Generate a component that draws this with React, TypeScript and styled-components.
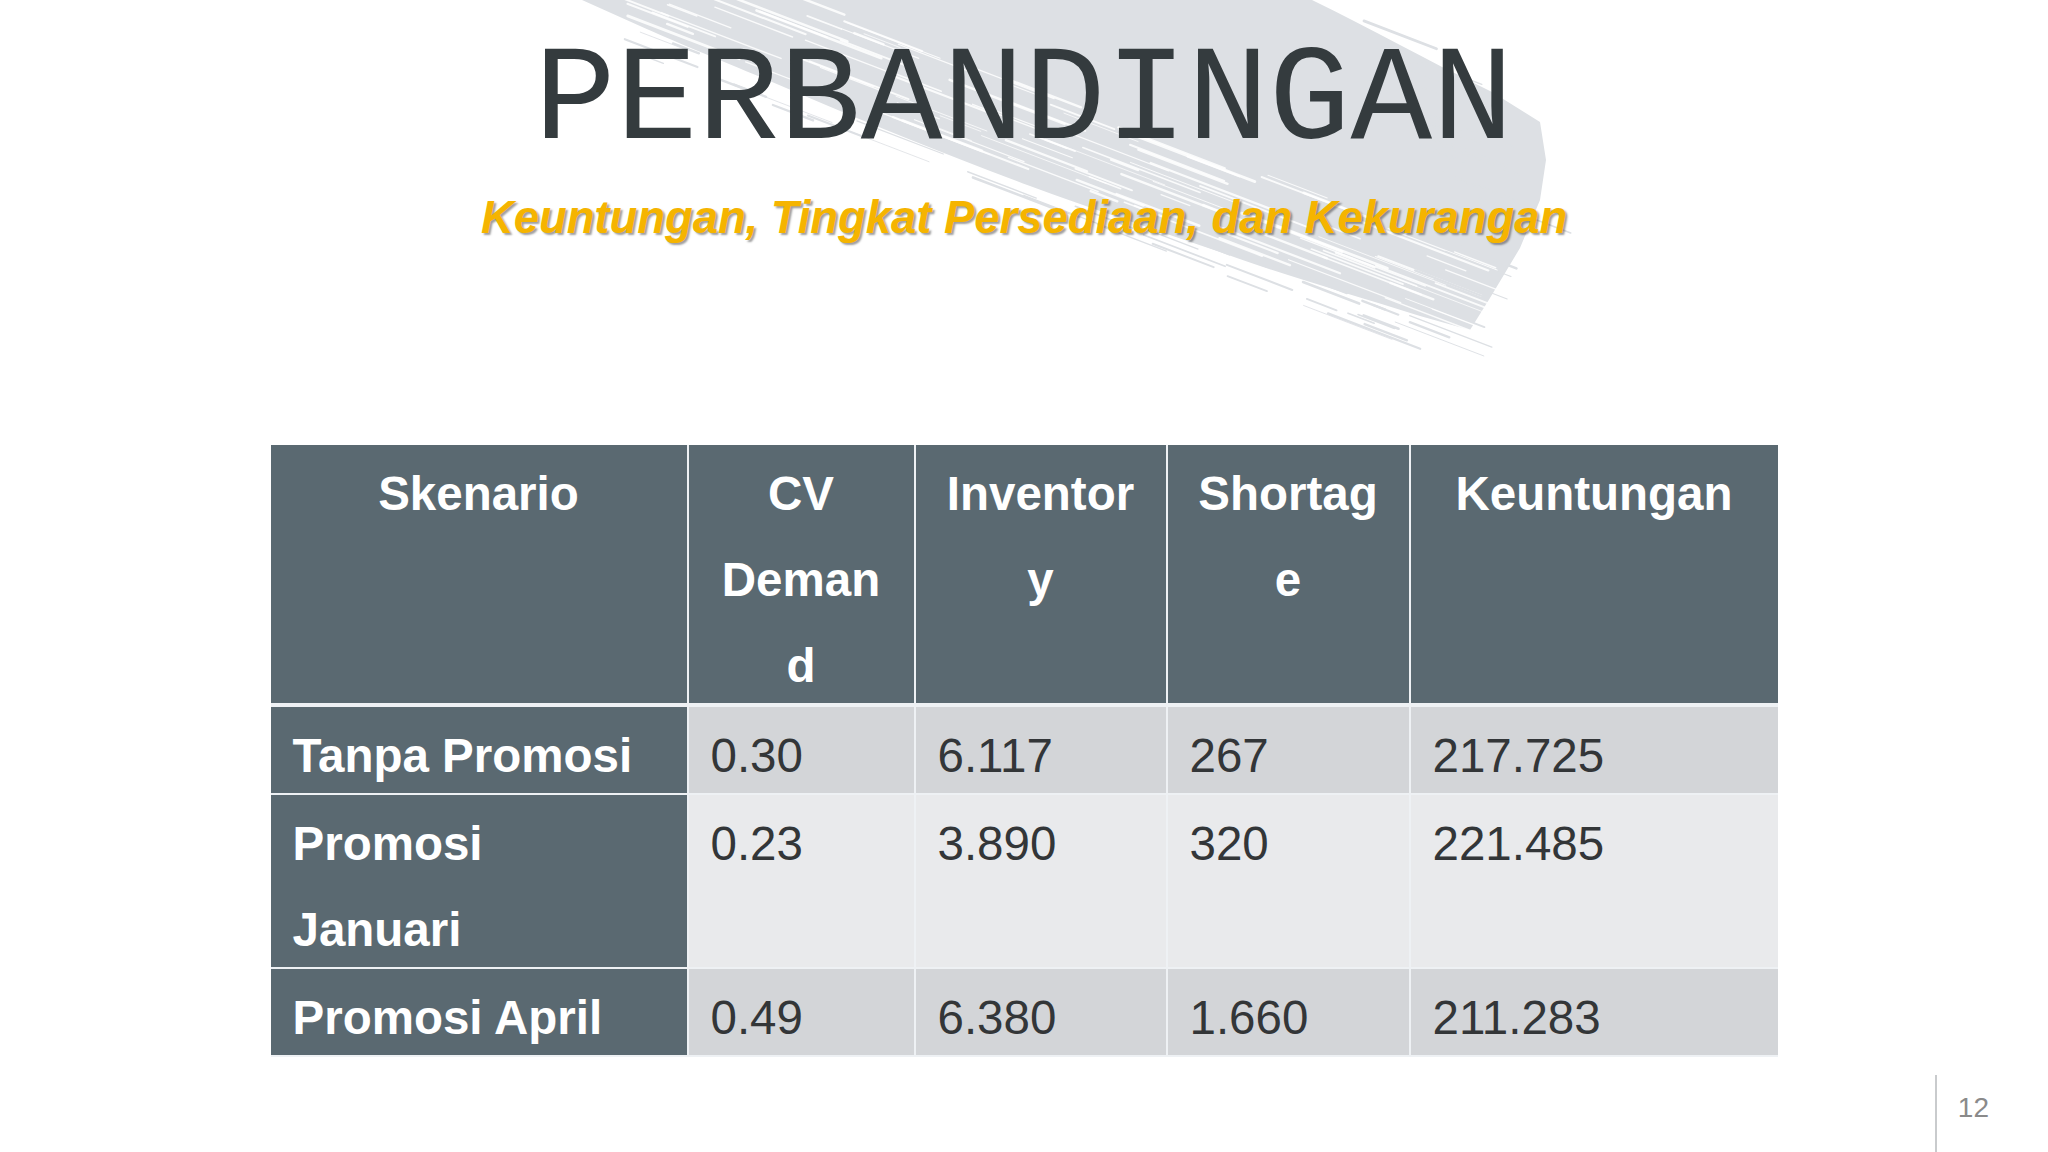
import React from "react";
import styled, { createGlobalStyle } from "styled-components";

const GlobalStyle = createGlobalStyle`
  html, body {
    margin: 0;
    padding: 0;
    background: #ffffff;
  }
  body {
    font-family: "Liberation Sans", Arial, sans-serif;
  }
`;

const Slide = styled.div`
  position: relative;
  width: 2048px;
  height: 1152px;
  overflow: hidden;
  background: #ffffff;
  display: flex;
  flex-direction: column;
`;

const Brush = styled.svg`
  position: absolute;
  top: 0;
  left: 0;
  z-index: 0;
`;

const Header = styled.header`
  position: relative;
  z-index: 1;
  display: flex;
  flex-direction: column;
  align-items: center;
  padding-top: 34px;
`;

const Title = styled.h1`
  margin: 0;
  font-family: "Liberation Mono", "Courier New", monospace;
  font-weight: 400;
  font-size: 136px;
  line-height: 1;
  color: #343b3e;
`;

const Subtitle = styled.h2`
  margin: 25px 0 0;
  font-family: "Liberation Sans", Arial, sans-serif;
  font-weight: 700;
  font-style: italic;
  font-size: 45.4px;
  line-height: 1;
  color: #f5b400;
  text-shadow: 2px 2px 2px rgba(0, 0, 0, 0.38);
`;

const Table = styled.table`
  position: relative;
  z-index: 1;
  margin: 205px auto 0;
  width: 1507px;
  table-layout: fixed;
  border-collapse: collapse;
  font-family: "Liberation Sans", Arial, sans-serif;
  font-size: 47.5px;
`;

const Col = styled.col<{ $w: number }>`
  width: ${(p) => p.$w}px;
`;

const HeadCell = styled.th`
  padding: 0 6px;
  vertical-align: top;
  text-align: center;
  line-height: 86px;
  font-weight: 700;
  color: #ffffff;
  background: #5a6971;
  border: 2px solid #eef1f4;
  border-top: none;
  border-bottom-width: 4px;
  &:first-child {
    border-left: none;
  }
  &:last-child {
    border-right: none;
  }
`;

const BodyCell = styled.td<{ $label?: boolean; $shade: "dark" | "light" }>`
  padding: 0 22px;
  vertical-align: top;
  text-align: left;
  line-height: 86px;
  white-space: nowrap;
  font-weight: ${(p) => (p.$label ? 700 : 400)};
  color: ${(p) => (p.$label ? "#ffffff" : "#333638")};
  background: ${(p) =>
    p.$label ? "#5a6971" : p.$shade === "dark" ? "#d3d5d8" : "#e9eaec"};
  border: 2px solid #eef1f4;
  &:first-child {
    border-left: none;
    white-space: normal;
  }
  &:last-child {
    border-right: none;
  }
`;

const CellText = styled.div`
  margin: 6px 0 -6px;
`;

const Footer = styled.footer`
  margin-top: auto;
  height: 77px;
  display: flex;
  justify-content: flex-end;
`;

const Divider = styled.div`
  width: 2px;
  background: #c9cbcd;
`;

const PageNum = styled.div`
  padding: 19px 0 0 21px;
  margin-right: 59px;
  font-family: "Liberation Sans", Arial, sans-serif;
  font-size: 28px;
  line-height: 1;
  color: #8a8a8a;
`;

const columns = [
  { w: 417, lines: ["Skenario"] },
  { w: 227, lines: ["CV", "Deman", "d"] },
  { w: 252, lines: ["Inventor", "y"] },
  { w: 243, lines: ["Shortag", "e"] },
  { w: 368, lines: ["Keuntungan"] },
];

const rows: { label: string[]; values: string[]; shade: "dark" | "light" }[] = [
  { label: ["Tanpa Promosi"], values: ["0.30", "6.117", "267", "217.725"], shade: "dark" },
  { label: ["Promosi", "Januari"], values: ["0.23", "3.890", "320", "221.485"], shade: "light" },
  { label: ["Promosi April"], values: ["0.49", "6.380", "1.660", "211.283"], shade: "dark" },
];

// pseudo random so the brush looks the same on every render
const rand = (i: number, n: number) => {
  const x = Math.sin(i * 12.9898 + n * 78.233) * 43758.5453;
  return x - Math.floor(x);
};

const BRUSH = "#dde0e4";

const BrushStroke = () => {
  const dx = 0.934;
  const dy = 0.358;

  // white scratches along the lower-left edge, inside the gray
  const scratches = Array.from({ length: 110 }, (_, i) => {
    const t = rand(i, 1);
    const bx = 590 + 850 * t;
    const by = 4 + 318 * t;
    const d = Math.pow(rand(i, 2), 1.6) * 80;
    const x1 = bx + 0.358 * d;
    const y1 = by - 0.934 * d;
    const len = 25 + rand(i, 3) * 120;
    const x2 = Math.min(x1 + dx * len, 1510);
    return { x1, y1, x2, y2: y1 + dy * (x2 - x1) / dx, w: 0.8 + rand(i, 4) * 2 };
  });

  // gray bristles escaping the lower-left edge
  const bristles = Array.from({ length: 45 }, (_, i) => {
    const t = rand(i, 5);
    const bx = 600 + 820 * t;
    const by = 8 + 310 * t;
    const d = -rand(i, 6) * 30;
    const x1 = bx + 0.358 * d;
    const y1 = by - 0.934 * d;
    const len = 20 + rand(i, 7) * 80;
    const x2 = Math.min(x1 + dx * len, 1500);
    return { x1, y1, x2, y2: y1 + dy * (x2 - x1) / dx, w: 0.8 + rand(i, 8) * 1.8 };
  });

  // ragged right edge
  const edge = Array.from({ length: 22 }, (_, i) => {
    const y = 20 + rand(i, 9) * 300;
    const edgeX = y < 200 ? 1440 + y * 0.55 : 1550 - (y - 200) * 0.6;
    const x1 = edgeX - 60 - rand(i, 10) * 40;
    const len = 40 + rand(i, 11) * 60;
    return { x1, y1: y, x2: x1 + dx * len, y2: y + dy * len, w: 1 + rand(i, 12) * 2 };
  });

  return (
    <Brush width="2048" height="420" viewBox="0 0 2048 420">
      <path
        d="M 582 0 L 1312 0 C 1370 28 1430 62 1492 92 L 1540 122 L 1546 160 L 1540 200 L 1520 248 L 1490 298 L 1470 330 L 1420 316 C 1350 294 1280 274 1220 252 C 1150 228 1090 208 1030 186 C 950 156 870 124 800 94 C 740 68 680 44 640 26 Z"
        fill={BRUSH}
      />
      {scratches.map((s, i) => (
        <line
          key={`s${i}`}
          x1={s.x1}
          y1={s.y1}
          x2={s.x2}
          y2={s.y2}
          stroke="#ffffff"
          strokeOpacity={0.85}
          strokeWidth={s.w}
          strokeLinecap="round"
        />
      ))}
      {bristles.map((s, i) => (
        <line
          key={`b${i}`}
          x1={s.x1}
          y1={s.y1}
          x2={s.x2}
          y2={s.y2}
          stroke={BRUSH}
          strokeWidth={s.w}
          strokeLinecap="round"
        />
      ))}
      {edge.map((s, i) => (
        <line
          key={`e${i}`}
          x1={s.x1}
          y1={s.y1}
          x2={s.x2}
          y2={s.y2}
          stroke={BRUSH}
          strokeWidth={s.w}
          strokeLinecap="round"
        />
      ))}
    </Brush>
  );
};

export default function App() {
  return (
    <>
      <GlobalStyle />
      <Slide>
        <BrushStroke />
        <Header>
          <Title>PERBANDINGAN</Title>
          <Subtitle>Keuntungan, Tingkat Persediaan, dan Kekurangan</Subtitle>
        </Header>

        <Table>
          <colgroup>
            {columns.map((c, i) => (
              <Col key={i} $w={c.w} />
            ))}
          </colgroup>
          <thead>
            <tr>
              {columns.map((c, i) => (
                <HeadCell key={i}>
                  <CellText>
                    {c.lines.map((l, j) => (
                      <div key={j}>{l}</div>
                    ))}
                  </CellText>
                </HeadCell>
              ))}
            </tr>
          </thead>
          <tbody>
            {rows.map((r, i) => (
              <tr key={i}>
                <BodyCell $label $shade={r.shade}>
                  <CellText>
                    {r.label.map((l, j) => (
                      <div key={j}>{l}</div>
                    ))}
                  </CellText>
                </BodyCell>
                {r.values.map((v, j) => (
                  <BodyCell key={j} $shade={r.shade}>
                    <CellText>{v}</CellText>
                  </BodyCell>
                ))}
              </tr>
            ))}
          </tbody>
        </Table>

        <Footer>
          <Divider />
          <PageNum>12</PageNum>
        </Footer>
      </Slide>
    </>
  );
}
